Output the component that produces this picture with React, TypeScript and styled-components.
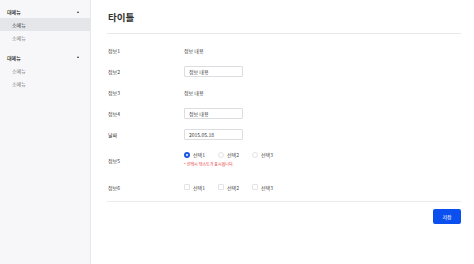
import React, { useState } from "react";
import styled, { createGlobalStyle } from "styled-components";

const GlobalStyle = createGlobalStyle`
  html, body {
    margin: 0;
    padding: 0;
    background: #ffffff;
    font-family: "Noto Sans CJK KR", "Noto Sans", sans-serif;
  }
`;

const menus = [
  { title: "대메뉴", items: ["소메뉴", "소메뉴"] },
  { title: "대메뉴", items: ["소메뉴", "소메뉴"] },
];

const App = () => {
  const [active, setActive] = useState("0-0");
  const [choice, setChoice] = useState(1);

  return (
    <Page>
      <GlobalStyle />
      <SideBar>
        {menus.map((menu, gi) => (
          <MenuGroup key={gi}>
            <GroupHead>
              <span>{menu.title}</span>
              <Caret />
            </GroupHead>
            {menu.items.map((item, ii) => (
              <MenuItem
                key={ii}
                $active={active === `${gi}-${ii}`}
                onClick={() => setActive(`${gi}-${ii}`)}
              >
                {item}
              </MenuItem>
            ))}
          </MenuGroup>
        ))}
      </SideBar>

      <Main>
        <Header>
          <Title>타이틀</Title>
        </Header>

        <Form>
          <Row>
            <Label>정보1</Label>
            <Value>정보 내용</Value>
          </Row>
          <Row>
            <Label>정보2</Label>
            <Input defaultValue="정보 내용" />
          </Row>
          <Row>
            <Label>정보3</Label>
            <Value>정보 내용</Value>
          </Row>
          <Row>
            <Label>정보4</Label>
            <Input defaultValue="정보 내용" />
          </Row>
          <Row $height={20}>
            <Label>날짜</Label>
            <Input defaultValue="2015.05.18" />
          </Row>
          <Row $height={32}>
            <Label>정보5</Label>
            <Stack>
              <Options>
                {[1, 2, 3].map((n) => (
                  <Option key={n} onClick={() => setChoice(n)}>
                    <Radio $checked={choice === n} />
                    선택{n}
                  </Option>
                ))}
              </Options>
              <ErrorText>* 선택시 텍스트가 표시됩니다.</ErrorText>
            </Stack>
          </Row>
          <Row $height={22}>
            <Label>정보6</Label>
            <Options>
              {[1, 2, 3].map((n) => (
                <Option key={n}>
                  <Check />
                  선택{n}
                </Option>
              ))}
            </Options>
          </Row>
        </Form>

        <Footer>
          <SaveButton>저장</SaveButton>
        </Footer>
      </Main>
    </Page>
  );
};

const Page = styled.div`
  display: flex;
  height: 100vh;
`;

const SideBar = styled.nav`
  width: 91px;
  flex-shrink: 0;
  background: #f7f7f9;
  border-right: 1px solid #e8e8ec;
  padding-top: 5px;
  box-sizing: border-box;
`;

const MenuGroup = styled.div`
  margin-bottom: 6.5px;
`;

const GroupHead = styled.div`
  height: 13px;
  display: flex;
  align-items: center;
  justify-content: space-between;
  padding: 0 11px 0 7px;
  font-size: 5px;
  font-weight: 500;
  color: #222;
`;

const Caret = styled.span`
  width: 0;
  height: 0;
  border-left: 1.5px solid transparent;
  border-right: 1.5px solid transparent;
  border-bottom: 2px solid #333;
`;

const MenuItem = styled.div<{ $active: boolean }>`
  height: 13px;
  display: flex;
  align-items: center;
  padding-left: 12px;
  font-size: 5px;
  color: ${(p) => (p.$active ? "#333" : "#777")};
  background: ${(p) => (p.$active ? "#e4e6ea" : "transparent")};
  cursor: pointer;
`;

const Main = styled.main`
  flex: 1;
  padding: 0 13px 0 16px;
`;

const Header = styled.div`
  height: 33px;
  display: flex;
  align-items: center;
  border-bottom: 1px solid #e8e8ea;
`;

const Title = styled.h1`
  margin: 0;
  padding-left: 1px;
  font-size: 9.5px;
  font-weight: 700;
  color: #333;
`;

const Form = styled.div`
  padding: 6px 0 3px;
  border-bottom: 1px solid #ececee;
`;

const Row = styled.div<{ $height?: number }>`
  display: flex;
  align-items: center;
  height: ${(p) => p.$height ?? 21}px;
`;

const Label = styled.div`
  width: 76px;
  padding-left: 1px;
  font-size: 5px;
  color: #333;
`;

const Value = styled.div`
  font-size: 5px;
  color: #333;
`;

const Input = styled.input`
  width: 59px;
  height: 11px;
  box-sizing: border-box;
  border: 1px solid #dcdde0;
  border-radius: 1px;
  padding: 0 4px;
  font-family: inherit;
  font-size: 5px;
  color: #333;
  outline: none;
`;

const Stack = styled.div`
  display: flex;
  flex-direction: column;
  gap: 2px;
  margin-top: -1px;
`;

const Options = styled.div`
  display: flex;
  align-items: center;
`;

const Option = styled.label`
  width: 34px;
  display: flex;
  align-items: center;
  gap: 3px;
  font-size: 5px;
  color: #444;
  cursor: pointer;
`;

const Radio = styled.span<{ $checked: boolean }>`
  width: 6px;
  height: 6px;
  box-sizing: border-box;
  border-radius: 50%;
  border: ${(p) => (p.$checked ? "2px solid #1a56e8" : "1px solid #e2e3e6")};
  background: #fff;
`;

const Check = styled.span`
  width: 6px;
  height: 6px;
  box-sizing: border-box;
  border: 1px solid #e2e3e6;
  border-radius: 1px;
  background: #fff;
`;

const ErrorText = styled.div`
  font-size: 4px;
  color: #e8383d;
  line-height: 8px;
`;

const Footer = styled.div`
  display: flex;
  justify-content: flex-end;
  padding-top: 7px;
`;

const SaveButton = styled.button`
  width: 28px;
  height: 15px;
  border: none;
  border-radius: 2px;
  background: #0b50ef;
  color: #fff;
  font-family: inherit;
  font-size: 5px;
  cursor: pointer;
`;

export default App;
